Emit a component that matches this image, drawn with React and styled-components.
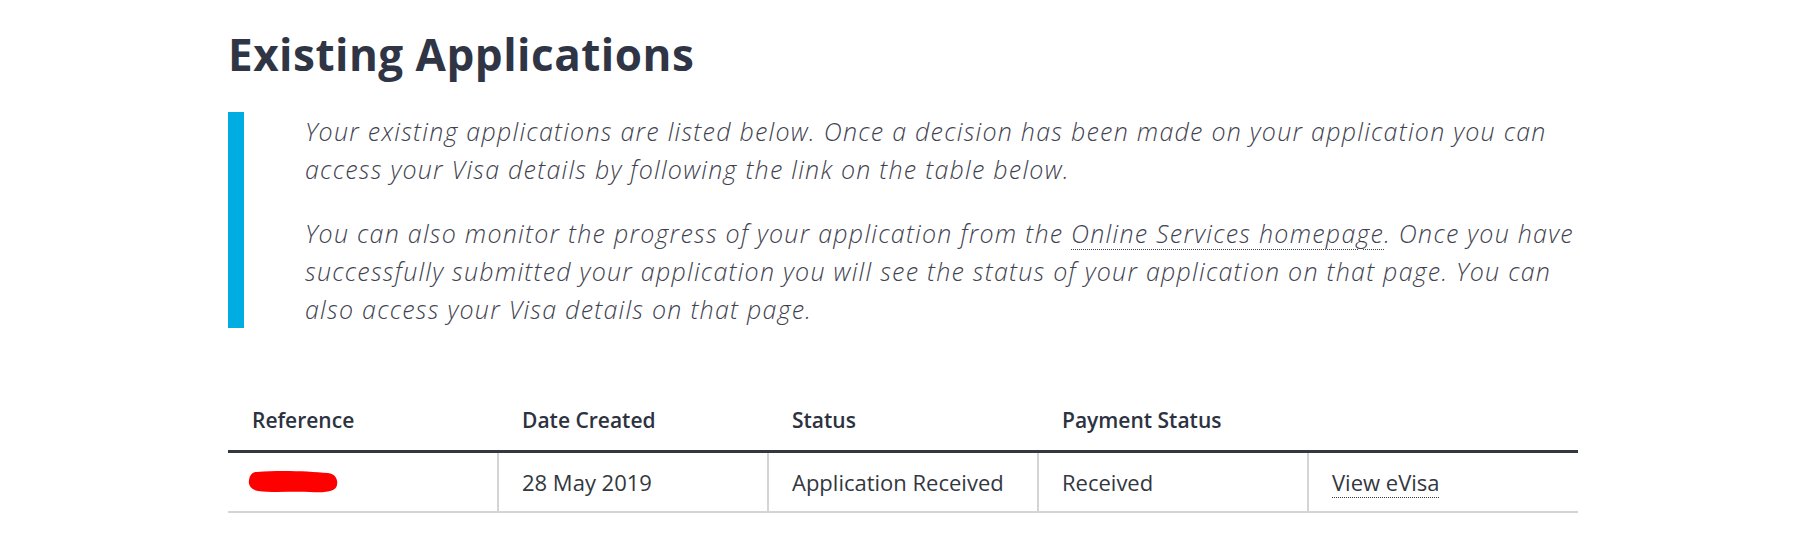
import { createGlobalStyle, styled } from "styled-components";

const GlobalStyle = createGlobalStyle`
    body {
        margin: 0;
        background: #fff;
        font-family: "Open Sans", "Liberation Sans", sans-serif;
        color: #333;
    }
`;

const applications = [
    { date: "28 May 2019", status: "Application Received", payment: "Received" },
];

const Redaction = () => (
    <RedactSvg viewBox="0 0 90 24" aria-hidden="true">
        <path d="M9 2 C30 0 60 1 80 3 C88 4 90 10 89 15 C88 21 80 23 62 22 C46 21 26 23 10 21 C3 20 0 15 1 10 C2 5 4 2 9 2 Z" fill="#ff0000" />
    </RedactSvg>
);

const App = () => {
    return (
        <>
            <GlobalStyle />
            <Container>
                <Title>Existing Applications</Title>
                <Callout>
                    <Text>
                        Your existing applications are listed below. Once a decision has been made on your application you can access your Visa details by following the link on the table below.
                    </Text>
                    <Text>
                        You can also monitor the progress of your application from the <DottedLink href="#">Online Services homepage</DottedLink>. Once you have successfully submitted your application you will see the status of your application on that page. You can also access your Visa details on that page.
                    </Text>
                </Callout>
                <Table>
                    <thead>
                        <tr>
                            <Th>Reference</Th>
                            <Th>Date Created</Th>
                            <Th>Status</Th>
                            <Th>Payment Status</Th>
                            <Th></Th>
                        </tr>
                    </thead>
                    <tbody>
                        {applications.map((app, i) => (
                            <tr key={i}>
                                <Td><Redaction /></Td>
                                <Td>{app.date}</Td>
                                <Td>{app.status}</Td>
                                <Td>{app.payment}</Td>
                                <Td><DottedLink href="#">View eVisa</DottedLink></Td>
                            </tr>
                        ))}
                    </tbody>
                </Table>
            </Container>
        </>
    );
}

const Container = styled.main`
    width: 1350px;
    margin-left: 228px;
    padding-top: 30px;
`;

const Title = styled.h1`
    margin: 0;
    font-size: 44px;
    line-height: 48px;
    font-weight: 700;
    color: #2f3545;
    letter-spacing: 0.5px;
`;

const Callout = styled.div`
    margin-top: 34px;
    border-left: 16px solid #00ade2;
    padding-left: 61px;
    display: flex;
    flex-direction: column;
    gap: 26px;
`;

const Text = styled.p`
    margin: 0;
    font-size: 25px;
    line-height: 38px;
    font-style: italic;
    font-weight: 300;
    letter-spacing: 1.25px;
    color: #3f4350;
`;

const DottedLink = styled.a`
    color: inherit;
    text-decoration: underline dotted 1px;
    text-underline-offset: 6px;
`;

const Table = styled.table`
    margin-top: 62px;
    width: 100%;
    border-collapse: collapse;
    table-layout: fixed;
`;

const Th = styled.th`
    text-align: left;
    padding: 15px 24px;
    font-size: 21px;
    line-height: 30px;
    font-weight: 600;
    color: #2d3240;
    border-bottom: 3px solid #333740;
`;

const Td = styled.td`
    padding: 14px 23px;
    font-size: 22px;
    line-height: 30px;
    color: #333740;
    border-bottom: 2px solid #d4d4d4;

    & + & {
        border-left: 2px solid #d4d4d4;
    }
`;

const RedactSvg = styled.svg`
    display: block;
    width: 90px;
    height: 24px;
    margin-left: -3px;
`;

export default App;
